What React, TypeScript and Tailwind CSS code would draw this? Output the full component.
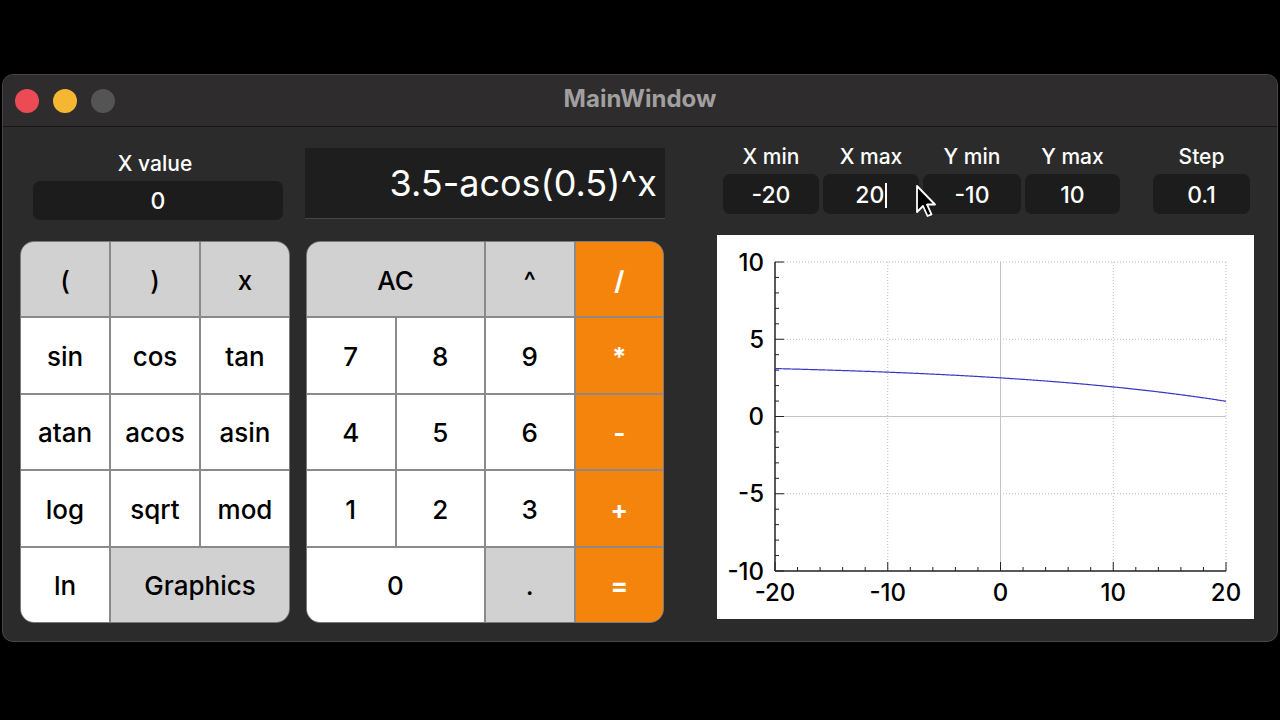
import React from 'react';

type Variant = 'gray' | 'white' | 'orange';

const Key: React.FC<{ label: string; variant?: Variant; wide?: boolean }> = ({ label, variant = 'white', wide }) => {
  const color =
    variant === 'gray'
      ? 'bg-[#d1d1d1] text-black font-medium'
      : variant === 'orange'
      ? 'bg-[#f5840c] text-white font-bold'
      : 'bg-white text-black font-medium';
  return (
    <div className={`${color} ${wide ? 'col-span-2' : ''} flex items-center justify-center pt-[3px] text-[26px] leading-none`}>
      {label}
    </div>
  );
};

const Field: React.FC<{ label: string; value: string; className: string; caret?: boolean }> = ({ label, value, className, caret }) => (
  <div className={`flex flex-col items-center ${className}`}>
    <div className="h-[24px] text-[21px] leading-[24px] font-medium text-white">{label}</div>
    <div className="mt-[5px] w-full h-[40px] rounded-[7px] bg-[#1c1c1c] flex items-center justify-center pt-[2px] text-[23px] font-medium text-white">
      {value}
      {caret && <span className="ml-[1px] w-[1.5px] h-[25px] bg-white" />}
    </div>
  </div>
);

const Graph: React.FC = () => {
  const x0 = 58;
  const x1 = 509;
  const y0 = 27;
  const y1 = 336;
  const sx = (v: number) => x0 + ((v + 20) / 40) * (x1 - x0);
  const sy = (v: number) => y0 + ((10 - v) / 20) * (y1 - y0);
  const pts: string[] = [];
  for (let i = 0; i <= 400; i++) {
    const x = -20 + i * 0.1;
    const y = 3.5 - Math.pow(Math.acos(0.5), x);
    pts.push(`${sx(x).toFixed(2)},${sy(y).toFixed(2)}`);
  }
  const yTicks = Array.from({ length: 21 }, (_, i) => i - 10);
  const xTicks = Array.from({ length: 21 }, (_, i) => -20 + i * 2);
  return (
    <svg width="537" height="384" viewBox="0 0 537 384">
      {[-10, 10, 20].map(v => (
        <line key={`gx${v}`} x1={sx(v)} x2={sx(v)} y1={y0} y2={y1} stroke="#bcbcbc" strokeWidth="1" strokeDasharray="1 2" />
      ))}
      {[10, 5, -5].map(v => (
        <line key={`gy${v}`} x1={x0} x2={x1} y1={sy(v)} y2={sy(v)} stroke="#bcbcbc" strokeWidth="1" strokeDasharray="1 2" />
      ))}
      <line x1={sx(0)} x2={sx(0)} y1={y0} y2={y1} stroke="#c4c4c4" strokeWidth="1" />
      <line x1={x0} x2={x1} y1={sy(0)} y2={sy(0)} stroke="#c4c4c4" strokeWidth="1" />
      <line x1={x0} x2={x0} y1={y0} y2={y1} stroke="#222" strokeWidth="1.5" />
      <line x1={x0} x2={x1} y1={y1} y2={y1} stroke="#222" strokeWidth="1.5" />
      {yTicks.map(v => (
        <line key={`ty${v}`} x1={x0} x2={x0 + (v % 5 === 0 ? 9 : 4)} y1={sy(v)} y2={sy(v)} stroke="#222" strokeWidth="1" />
      ))}
      {xTicks.map(v => (
        <line key={`tx${v}`} x1={sx(v)} x2={sx(v)} y1={y1} y2={y1 - (v % 10 === 0 ? 9 : 4)} stroke="#222" strokeWidth="1" />
      ))}
      <polyline points={pts.join(' ')} fill="none" stroke="#3b37c4" strokeWidth="1.2" />
      {[10, 5, 0, -5, -10].map(v => (
        <text key={`ly${v}`} x={47} y={sy(v) + 8.5} textAnchor="end" fontSize="24" fontWeight="500" fill="#000" fontFamily="Inter, sans-serif">
          {v === 0 ? '0' : v < 0 ? `-${-v}` : `${v}`}
        </text>
      ))}
      {[-20, -10, 0, 10, 20].map(v => (
        <text key={`lx${v}`} x={sx(v)} y={366} textAnchor="middle" fontSize="24" fontWeight="500" fill="#000" fontFamily="Inter, sans-serif">
          {v < 0 ? `-${-v}` : `${v}`}
        </text>
      ))}
    </svg>
  );
};

export default function App() {
  return (
    <div className="relative w-[1280px] h-[720px] bg-black pt-[74px] pl-[2px] font-['Inter',sans-serif]">
      <div className="w-[1276px] h-[568px] rounded-[11px] overflow-hidden bg-[#2b2b2b] border border-[#474747] flex flex-col">
        {/* title bar */}
        <div className="h-[52px] shrink-0 bg-[#2e2c2c] border-b border-[#171717] grid grid-cols-[1fr_auto_1fr] items-center">
          <div className="flex items-center gap-[14px] pl-[12px]">
            <span className="w-[24px] h-[24px] rounded-full bg-[#ec4b55]" />
            <span className="w-[24px] h-[24px] rounded-full bg-[#f5b731]" />
            <span className="w-[24px] h-[24px] rounded-full bg-[#555454]" />
          </div>
          <div className="pb-[3px] text-[24px] font-bold text-[#a19f9f]">MainWindow</div>
          <div />
        </div>

        {/* body */}
        <div className="flex-1 flex pl-[17px]">
          {/* left column */}
          <div className="w-[270px] flex flex-col pt-[25px]">
            <div className="h-[24px] text-center text-[21px] leading-[24px] font-medium text-white">X value</div>
            <div className="mt-[5px] ml-[13px] w-[250px] h-[39px] rounded-[7px] bg-[#1c1c1c] flex items-center justify-center pt-[2px] text-[23px] font-medium text-white">
              0
            </div>
            <div className="mt-[21px] h-[382px] grid grid-cols-3 grid-rows-5 gap-[2px] bg-[#8a8a8a] border border-[#7a7a7a] rounded-[14px] overflow-hidden">
              <Key label="(" variant="gray" />
              <Key label=")" variant="gray" />
              <Key label="x" variant="gray" />
              <Key label="sin" />
              <Key label="cos" />
              <Key label="tan" />
              <Key label="atan" />
              <Key label="acos" />
              <Key label="asin" />
              <Key label="log" />
              <Key label="sqrt" />
              <Key label="mod" />
              <Key label="ln" />
              <Key label="Graphics" variant="gray" wide />
            </div>
          </div>

          {/* middle column */}
          <div className="ml-[15px] w-[360px] flex flex-col">
            <div className="mt-[21px] h-[71px] bg-[#1e1e1e] border-b border-[#474747] flex items-center justify-end pr-[8px] text-[36px] text-white">
              3.5-acos(0.5)^x
            </div>
            <div className="mt-[22px] mx-[1px] h-[382px] grid grid-cols-4 grid-rows-5 gap-[2px] bg-[#8a8a8a] border border-[#7a7a7a] rounded-[14px] overflow-hidden">
              <Key label="AC" variant="gray" wide />
              <Key label="^" variant="gray" />
              <Key label="/" variant="orange" />
              <Key label="7" />
              <Key label="8" />
              <Key label="9" />
              <Key label="*" variant="orange" />
              <Key label="4" />
              <Key label="5" />
              <Key label="6" />
              <Key label="-" variant="orange" />
              <Key label="1" />
              <Key label="2" />
              <Key label="3" />
              <Key label="+" variant="orange" />
              <Key label="0" wide />
              <Key label="." variant="gray" />
              <Key label="=" variant="orange" />
            </div>
          </div>

          {/* right column */}
          <div className="ml-[52px] w-[537px] flex flex-col pt-[18px]">
            <div className="flex">
              <Field label="X min" value="-20" className="ml-[6px] w-[96px]" />
              <Field label="X max" value="20" caret className="ml-[4px] w-[96px]" />
              <Field label="Y min" value="-10" className="ml-[4px] w-[98px]" />
              <Field label="Y max" value="10" className="ml-[4px] w-[95px]" />
              <Field label="Step" value="0.1" className="ml-[33px] w-[97px]" />
            </div>
            <div className="mt-[21px] w-[537px] h-[384px] bg-white">
              <Graph />
            </div>
          </div>
        </div>
      </div>

      {/* mouse pointer */}
      <svg className="absolute left-[915px] top-[184px]" width="22" height="36" viewBox="0 0 22 36">
        <path d="M2 2 L2 28 L8 22 L12.5 32 L16.5 30.3 L12 20.5 L20 20.5 Z" fill="#000" stroke="#fff" strokeWidth="1.8" strokeLinejoin="round" />
      </svg>
    </div>
  );
}
